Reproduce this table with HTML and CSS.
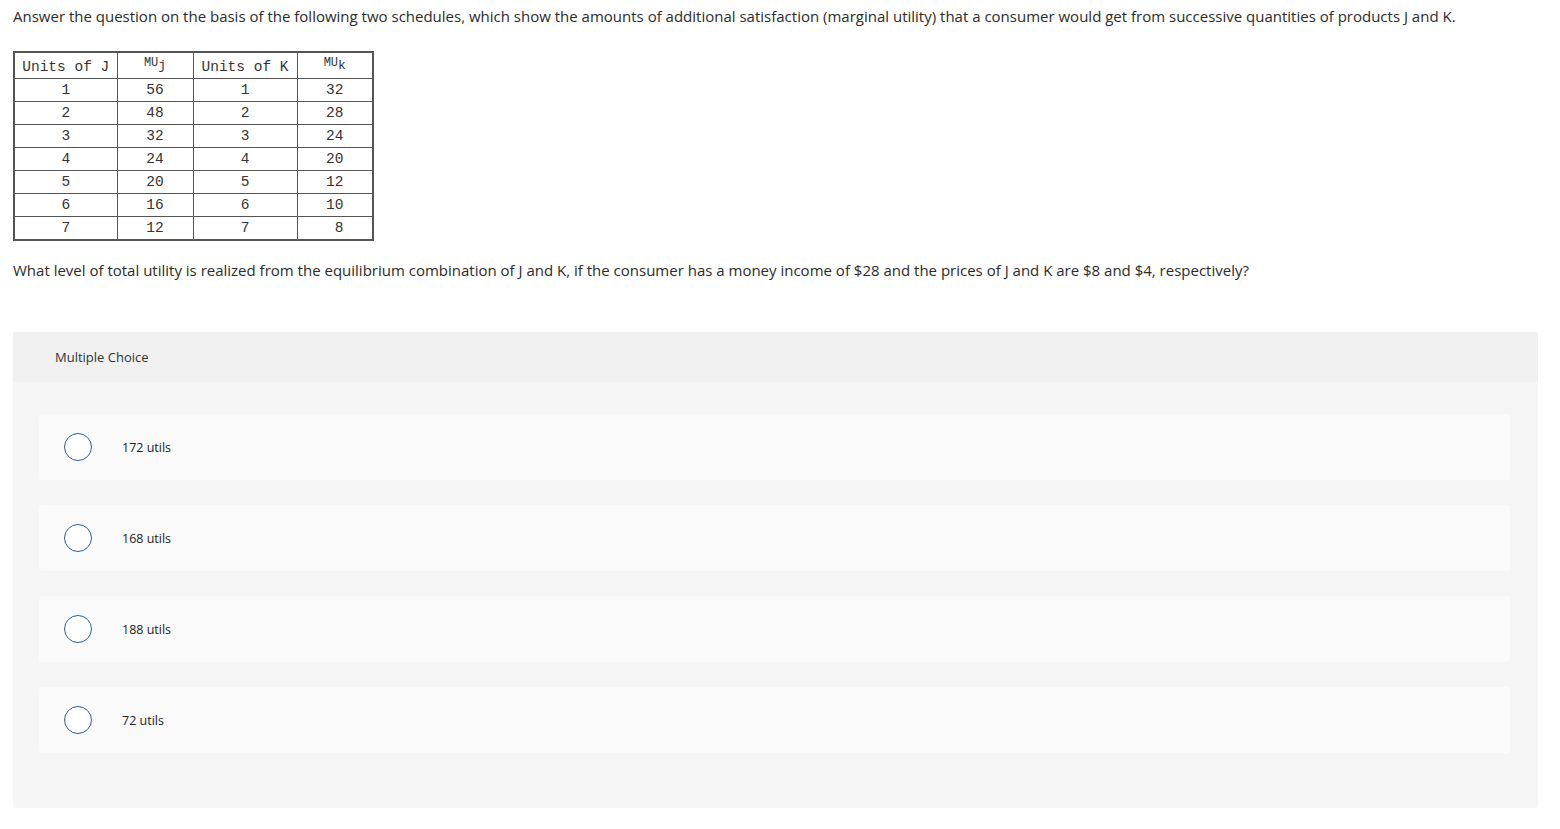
FILE: index.html
```html
<!DOCTYPE html>
<html>
<head>
<meta charset="utf-8">
<link rel="stylesheet" href="styles.css">
</head>
<body>
<div class="page">
  <p class="prompt">Answer the question on the basis of the following two schedules, which show the amounts of additional satisfaction (marginal utility) that a consumer would get from successive quantities of products J and K.</p>
  <table class="sched">
    <colgroup><col class="c1"><col class="c2"><col class="c3"><col class="c4"></colgroup>
    <thead>
      <tr><th>Units of J</th><th class="mu">MU<sub>j</sub></th><th>Units of K</th><th class="mu">MU<sub>k</sub></th></tr>
    </thead>
    <tbody>
      <tr><td>1</td><td>56</td><td>1</td><td>32</td></tr>
      <tr><td>2</td><td>48</td><td>2</td><td>28</td></tr>
      <tr><td>3</td><td>32</td><td>3</td><td>24</td></tr>
      <tr><td>4</td><td>24</td><td>4</td><td>20</td></tr>
      <tr><td>5</td><td>20</td><td>5</td><td>12</td></tr>
      <tr><td>6</td><td>16</td><td>6</td><td>10</td></tr>
      <tr><td>7</td><td>12</td><td>7</td><td>&nbsp;8</td></tr>
    </tbody>
  </table>
  <p class="question">What level of total utility is realized from the equilibrium combination of J and K, if the consumer has a money income of $28 and the prices of J and K are $8 and $4, respectively?</p>
  <section class="mc">
    <div class="mc-head">Multiple Choice</div>
    <div class="mc-body">
      <div class="opt"><span class="radio"></span><span class="label">172 utils</span></div>
      <div class="opt"><span class="radio"></span><span class="label">168 utils</span></div>
      <div class="opt"><span class="radio"></span><span class="label">188 utils</span></div>
      <div class="opt"><span class="radio"></span><span class="label">72 utils</span></div>
    </div>
  </section>
</div>
</body>
</html>
```
FILE: styles.css
```css
html, body {
  margin: 0;
  padding: 0;
  background: #ffffff;
}
body {
  font-family: "Open Sans", "Lato", sans-serif;
  color: #333333;
}
.page {
  padding: 6px 22px 0 13px;
}
.prompt {
  margin: 0;
  font-size: 15px;
  line-height: 20px;
  color: #2b2b2b;
}
.sched {
  margin-top: 25px;
  border-collapse: collapse;
  table-layout: fixed;
  width: 359px;
  border: 2px solid #555555;
  font-family: "Liberation Mono", "DejaVu Sans Mono", monospace;
  font-size: 14.5px;
  color: #333333;
}
.c1 { width: 103px; }
.c2 { width: 76px; }
.c3 { width: 104px; }
.c4 { width: 76px; }
.sched th, .sched td {
  border: 1px solid #555555;
  text-align: center;
  font-weight: normal;
  padding: 1px 0 0 0;
  height: 21px;
  line-height: 21px;
  white-space: nowrap;
}
.sched th {
  height: 22px;
  line-height: 22px;
  padding: 3px 0 0 0;
}
.sched th.mu {
  font-size: 12px;
  vertical-align: top;
  line-height: 18px;
  padding-top: 1px;
  height: 24px;
}
.sched th sub {
  font-size: 13px;
  vertical-align: -3px;
  line-height: 0;
}
.question {
  margin: 19px 0 0 0;
  font-size: 15px;
  line-height: 20px;
  color: #2b2b2b;
}
.mc {
  margin-top: 52px;
  background: #f5f5f5;
  border-radius: 3px;
}
.mc-head {
  background: #f0f0f0;
  height: 50px;
  display: flex;
  align-items: center;
  padding-left: 42px;
  font-size: 13px;
  color: #333333;
  border-radius: 3px 3px 0 0;
}
.mc-body {
  padding: 32px 28px 55px 26px;
  display: flex;
  flex-direction: column;
  gap: 25px;
}
.opt {
  height: 66px;
  background: #fafafa;
  border-radius: 4px;
  display: flex;
  align-items: center;
}
.radio {
  box-sizing: border-box;
  width: 28px;
  height: 28px;
  border: 1.5px solid #2d5f8f;
  border-radius: 50%;
  background: #ffffff;
  margin-left: 25px;
  flex: none;
}
.label {
  margin-left: 30px;
  font-size: 12.5px;
  color: #222222;
}
```
